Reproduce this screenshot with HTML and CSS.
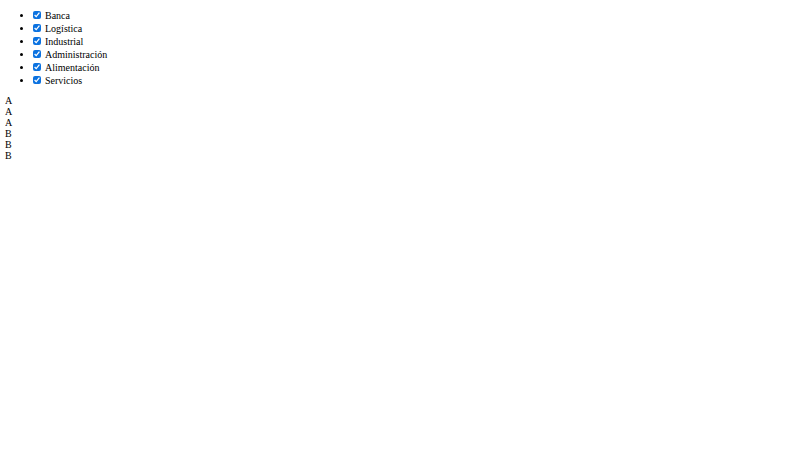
FILE: index.html
```html
<!DOCTYPE html>
<html lang="es">
<head>
<meta charset="utf-8">
<title>Sectores</title>
<link rel="stylesheet" href="styles.css">
</head>
<body>
<ul class="filters">
  <li><input class="check" type="checkbox" id="banca" checked><label for="banca">Banca</label></li>
  <li><input class="check" type="checkbox" id="logistica" checked><label for="logistica">Logística</label></li>
  <li><input class="check" type="checkbox" id="industrial" checked><label for="industrial">Industrial</label></li>
  <li><input class="check" type="checkbox" id="administracion" checked><label for="administracion">Administración</label></li>
  <li><input class="check" type="checkbox" id="alimentacion" checked><label for="alimentacion">Alimentación</label></li>
  <li><input class="check" type="checkbox" id="servicios" checked><label for="servicios">Servicios</label></li>
</ul>
<div class="results">
  <div>A</div>
  <div>A</div>
  <div>A</div>
  <div>B</div>
  <div>B</div>
  <div>B</div>
</div>
</body>
</html>
```
FILE: styles.css
```css
body {
  margin: 9px 5px;
  background: #fff;
  color: #000;
  font-family: "Liberation Serif", serif;
  font-size: 10px;
}

.filters {
  margin: 0 0 8px;
  padding-left: 28px;
  line-height: 13px;
}

.check {
  width: 8px;
  height: 8px;
  margin: 1px 4px 1px 0;
  vertical-align: 0;
  accent-color: #0b72e0;
}

.results {
  line-height: 11px;
}
```
